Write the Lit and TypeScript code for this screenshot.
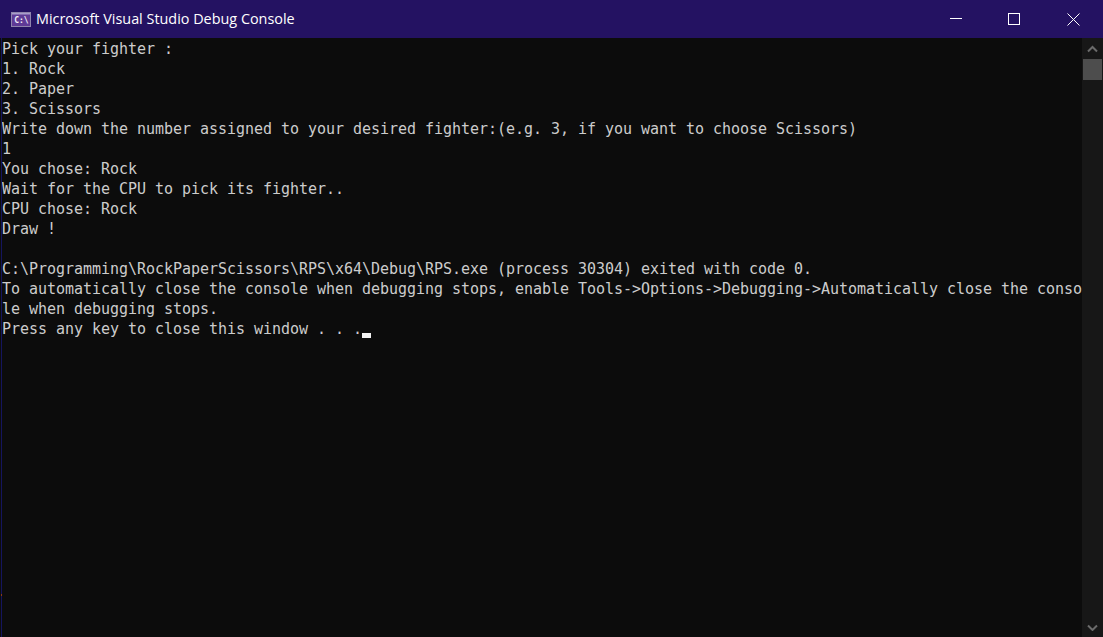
import { LitElement, html, css } from "lit";
import { customElement } from "lit/decorators.js";

const LINES = [
  "Pick your fighter :",
  "1. Rock",
  "2. Paper",
  "3. Scissors",
  "Write down the number assigned to your desired fighter:(e.g. 3, if you want to choose Scissors)",
  "1",
  "You chose: Rock",
  "Wait for the CPU to pick its fighter..",
  "CPU chose: Rock",
  "Draw !",
  "",
  "C:\\Programming\\RockPaperScissors\\RPS\\x64\\Debug\\RPS.exe (process 30304) exited with code 0.",
  "To automatically close the console when debugging stops, enable Tools->Options->Debugging->Automatically close the conso",
  "le when debugging stops.",
];

@customElement("app-root")
export class AppRoot extends LitElement {
  static styles = css`
    :host {
      display: flex;
      flex-direction: column;
      width: 1103px;
      height: 637px;
      overflow: hidden;
      background: #0c0c0c;
    }
    .titlebar {
      flex: 0 0 38px;
      height: 38px;
      display: flex;
      align-items: center;
      background: #241262;
      color: #fff;
      font: 14.4px/20px "Open Sans", "Noto Sans", sans-serif;
    }
    .app-icon {
      margin-left: 11px;
      margin-right: 5px;
      flex: none;
    }
    .icon-text {
      font: bold 8px "DejaVu Sans Mono", monospace;
      fill: #f4f0fa;
    }
    .title {
      flex: 1;
      white-space: nowrap;
    }
    .controls {
      display: flex;
      height: 100%;
      padding-right: 1px;
    }
    .ctl {
      width: 58px;
      display: flex;
      align-items: center;
      justify-content: center;
    }
    .ctl.close {
      margin-left: 1px;
    }
    .body {
      flex: 1;
      display: flex;
      min-height: 0;
    }
    .edge {
      flex: 0 0 1px;
      margin-left: 1px;
      background: linear-gradient(
        #15155e 0 556px,
        #8a3a1c 556px 558px,
        #15155e 558px
      );
    }
    .console {
      flex: 1;
      padding: 1px 0 0 0;
      color: #cccccc;
      font: 15px/20px "DejaVu Sans Mono", monospace;
      letter-spacing: -0.03px;
      overflow: hidden;
      min-width: 0;
    }
    .line {
      height: 20px;
      white-space: pre;
    }
    .cursor {
      display: inline-block;
      width: 9px;
      height: 5px;
      background: #f2f2f2;
      vertical-align: -4px;
    }
    .scrollbar {
      flex: 0 0 21px;
      width: 21px;
      background: #171717;
      display: flex;
      flex-direction: column;
    }
    .arrow {
      flex: 0 0 21px;
      display: flex;
      align-items: center;
      justify-content: center;
    }
    .thumb {
      height: 21px;
      margin: 0 1px;
      background: #4d4d4d;
    }
    .track {
      flex: 1;
    }
  `;

  render() {
    return html`
      <div class="titlebar">
        <svg class="app-icon" width="20" height="15" viewBox="0 0 20 15">
          <rect x="0.5" y="0.5" width="19" height="14" fill="#5f3a96" stroke="#8f84ad" />
          <rect x="1" y="1" width="18" height="1.5" fill="#a89ccb" />
          <text class="icon-text" x="3.2" y="11">C:\\</text>
        </svg>
        <span class="title">Microsoft Visual Studio Debug Console</span>
        <div class="controls">
          <div class="ctl">
            <svg width="12" height="12" viewBox="0 0 12 12"><path d="M0 5.5 H12" stroke="#fff" /></svg>
          </div>
          <div class="ctl">
            <svg width="12" height="12" viewBox="0 0 12 12"><rect x="0.5" y="0.5" width="11" height="11" fill="none" stroke="#fff" /></svg>
          </div>
          <div class="ctl close">
            <svg width="13" height="13" viewBox="0 0 13 13"><path d="M0.5 0.5 L12.5 12.5 M12.5 0.5 L0.5 12.5" stroke="#fff" /></svg>
          </div>
        </div>
      </div>
      <div class="body">
        <div class="edge"></div>
        <div class="console">
          ${LINES.map((l) => html`<div class="line">${l}</div>`)}
          <div class="line">Press any key to close this window . . .<span class="cursor"></span></div>
        </div>
        <div class="scrollbar">
          <div class="arrow">
            <svg width="11" height="8" viewBox="0 0 11 8"><path d="M1 6.5 L5.5 2 L10 6.5" fill="none" stroke="#6b6b6b" stroke-width="2" /></svg>
          </div>
          <div class="thumb"></div>
          <div class="track"></div>
          <div class="arrow">
            <svg width="11" height="8" viewBox="0 0 11 8"><path d="M1 2.5 L5.5 7 L10 2.5" fill="none" stroke="#6b6b6b" stroke-width="2" /></svg>
          </div>
        </div>
      </div>
    `;
  }
}
